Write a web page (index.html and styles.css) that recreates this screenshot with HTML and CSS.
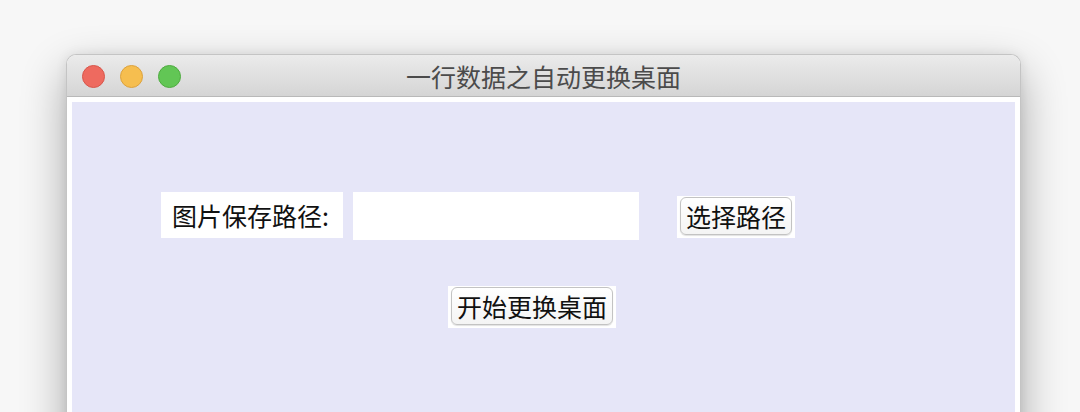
FILE: index.html
```html
<!DOCTYPE html>
<html lang="zh">
<head>
  <meta charset="UTF-8" />
  <title>一行数据之自动更换桌面</title>
  <link rel="stylesheet" href="styles.css">
</head>
<body>
  <div class="window">
    <div class="titlebar">
      <div class="lights">
        <span class="light red"></span>
        <span class="light yellow"></span>
        <span class="light green"></span>
      </div>
      <div class="title">一行数据之自动更换桌面</div>
    </div>
    <div class="frame">
      <div class="canvas">
        <div class="row">
          <div class="label">图片保存路径:</div>
          <div class="entry"></div>
          <div class="btn-wrap pick"><button class="btn">选择路径</button></div>
        </div>
        <div class="row start">
          <div class="btn-wrap"><button class="btn">开始更换桌面</button></div>
        </div>
      </div>
    </div>
  </div>
</body>
</html>
```

FILE: styles.css
```css
body {
  margin: 0;
  background: #f7f7f7;
  font-family: "Noto Sans CJK SC", "Noto Sans", sans-serif;
  overflow: hidden;
}
.window {
  width: 955px;
  margin: 54px 0 0 66px;
  box-sizing: border-box;
  border: 1px solid #c4c4c4;
  border-bottom: none;
  border-radius: 10px 10px 0 0;
  background: #fff;
  box-shadow: 0 18px 45px rgba(0,0,0,0.32), 0 0 12px rgba(0,0,0,0.08);
}
.titlebar {
  position: relative;
  height: 41px;
  border-bottom: 1px solid #b9b9b9;
  border-radius: 9px 9px 0 0;
  background: linear-gradient(to bottom, #ebebeb, #d5d5d5);
  display: flex;
  align-items: center;
  justify-content: center;
}
.lights {
  position: absolute;
  left: 15px;
  top: 10px;
  display: flex;
  gap: 15px;
}
.light {
  width: 21px;
  height: 21px;
  border-radius: 50%;
  border: 1px solid;
}
.red { background: #ee6a5f; border-color: #d8564b; }
.yellow { background: #f6be4f; border-color: #dca23e; }
.green { background: #62c655; border-color: #4fab40; }
.title {
  font-size: 25px;
  color: #4b4b4b;
}
.frame {
  padding: 5px 5px 0 5px;
}
.canvas {
  background: #e6e6f8;
  height: 320px;
  padding: 89px 0 0 89px;
}
.row {
  display: flex;
  align-items: flex-start;
}
.label {
  background: #fff;
  height: 46px;
  line-height: 46px;
  margin-top: 1px;
  padding: 0 14px 0 11px;
  font-size: 25px;
  color: #111;
}
.entry {
  background: #fff;
  width: 286px;
  height: 48px;
  margin-left: 10px;
  margin-top: 1px;
}
.btn-wrap {
  background: #fff;
  padding: 1px 3px 3px 3px;
}
.pick {
  margin: 5px 0 0 38px;
}
.btn {
  font-family: "Noto Sans CJK SC", "Noto Sans", sans-serif;
  font-size: 25px;
  color: #111;
  height: 38px;
  padding: 0 5px;
  line-height: 36px;
  border: 1px solid #c3c3c3;
  border-radius: 6px;
  background: linear-gradient(to bottom, #ffffff, #f4f4f4);
  box-shadow: 0 1px 1px rgba(0,0,0,0.12);
}
.start {
  margin: 46px 0 0 287px;
}
```
